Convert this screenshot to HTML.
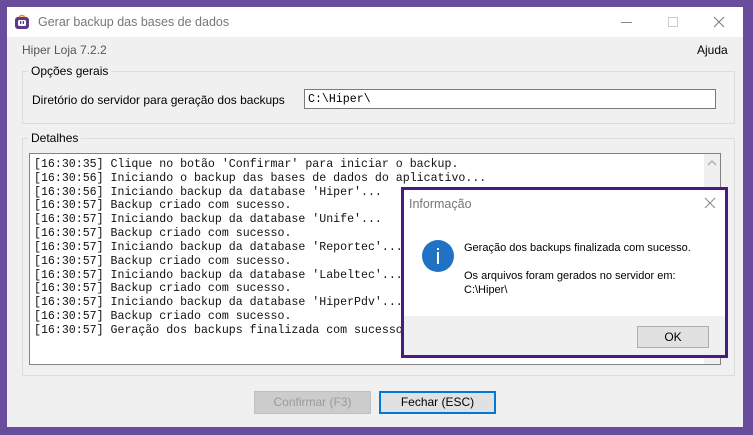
<!DOCTYPE html>
<html><head><meta charset="utf-8"><style>
*{margin:0;padding:0;box-sizing:border-box}
body{width:753px;height:435px;background:#6a4c9c;position:relative;overflow:hidden;font-family:"Liberation Sans",sans-serif;font-size:12px;color:#000}
.a{position:absolute}
.win{left:7px;top:7px;width:736px;height:420px;background:#f0f0f0}
.tb{left:7px;top:7px;width:736px;height:30px;background:#fff}
.grp{border:1px solid #dcdcdc}
.lbl{background:#f0f0f0;padding:0 3px}
.log{font-family:"Liberation Mono",monospace;font-size:11.6px;line-height:13.83px;white-space:pre;color:#111}
.btn{border:1px solid #adadad;background:#e1e1e1;text-align:center;line-height:20px}
</style></head><body>
<div class="a win"></div>
<div class="a tb"></div>
<svg class="a" style="left:14px;top:14px" width="16" height="16" viewBox="0 0 16 16"><rect x="1" y="3" width="14" height="12" rx="3" fill="#5b3a8c"/><rect x="4" y="6" width="8" height="6" rx="1.5" fill="#fff"/><rect x="6" y="7" width="1.3" height="3" fill="#5b3a8c"/><rect x="8.7" y="7" width="1.3" height="3" fill="#5b3a8c"/><path d="M5 3 Q8 0 11 3" stroke="#f08a24" stroke-width="1.6" fill="none"/></svg>
<div class="a" style="left:38px;top:15px;color:#777;font-size:12.5px">Gerar backup das bases de dados</div>
<div class="a" style="left:621px;top:22px;width:11px;height:1px;background:#888"></div>
<div class="a" style="left:668px;top:17px;width:10px;height:10px;border:1px solid #ccc"></div>
<svg class="a" style="left:713px;top:16px" width="12" height="12"><path d="M1 1L11 11M11 1L1 11" stroke="#777" stroke-width="1"/></svg>
<div class="a" style="left:22px;top:43px;color:#555">Hiper Loja 7.2.2</div>
<div class="a" style="left:697px;top:43px">Ajuda</div>
<div class="a grp" style="left:22px;top:71px;width:713px;height:53px"></div>
<div class="a lbl" style="left:28px;top:64px">Opções gerais</div>
<div class="a" style="left:32px;top:93px">Diretório do servidor para geração dos backups</div>
<div class="a" style="left:304px;top:89px;width:412px;height:20px;background:#fff;border:1px solid #7a7a7a;font-family:'Liberation Mono',monospace;font-size:11.6px;padding:3px 3px">C:\Hiper\</div>
<div class="a grp" style="left:22px;top:138px;width:713px;height:238px"></div>
<div class="a lbl" style="left:28px;top:131px">Detalhes</div>
<div class="a" style="left:29px;top:153px;width:692px;height:212px;background:#fff;border:1px solid #828282"></div>
<div class="a" style="left:704px;top:154px;width:16px;height:210px;background:#f0f0f0"></div>
<svg class="a" style="left:707px;top:159px" width="10" height="8"><path d="M1 6L5 2L9 6" stroke="#aaa" fill="none" stroke-width="1.3"/></svg>
<div class="a log" style="left:34px;top:158px">[16:30:35] Clique no botão 'Confirmar' para iniciar o backup.
[16:30:56] Iniciando o backup das bases de dados do aplicativo...
[16:30:56] Iniciando backup da database 'Hiper'...
[16:30:57] Backup criado com sucesso.
[16:30:57] Iniciando backup da database 'Unife'...
[16:30:57] Backup criado com sucesso.
[16:30:57] Iniciando backup da database 'Reportec'...
[16:30:57] Backup criado com sucesso.
[16:30:57] Iniciando backup da database 'Labeltec'...
[16:30:57] Backup criado com sucesso.
[16:30:57] Iniciando backup da database 'HiperPdv'...
[16:30:57] Backup criado com sucesso.
[16:30:57] Geração dos backups finalizada com sucesso.</div>
<div class="a btn" style="left:254px;top:391px;width:117px;height:23px;background:#cccccc;border-color:#bfbfbf;color:#9a9a9a">Confirmar (F3)</div>
<div class="a btn" style="left:379px;top:391px;width:117px;height:23px;border:2px solid #0078d7;line-height:19px">Fechar (ESC)</div>
<div class="a" style="left:401px;top:187px;width:327px;height:171px;border:3px solid #4a1a82;background:#fff"></div>
<div class="a" style="left:404px;top:316px;width:321px;height:39px;background:#f0f0f0"></div>
<div class="a" style="left:409px;top:197px;color:#777;font-size:12.5px">Informação</div>
<svg class="a" style="left:704px;top:197px" width="12" height="12"><path d="M1 1L11 11M11 1L1 11" stroke="#888" stroke-width="1"/></svg>
<svg class="a" style="left:422px;top:240px" width="32" height="32"><circle cx="16" cy="16" r="16" fill="#1f72c4"/><rect x="15" y="8" width="2" height="2" fill="#fff"/><rect x="15" y="12" width="2" height="12" fill="#fff"/></svg>
<div class="a" style="left:464px;top:242px;font-size:11px">Geração dos backups finalizada com sucesso.</div>
<div class="a" style="left:464px;top:269px;line-height:14px;font-size:11px">Os arquivos foram gerados no servidor em:<br>C:\Hiper\</div>
<div class="a btn" style="left:637px;top:326px;width:72px;height:22px">OK</div>
</body></html>
